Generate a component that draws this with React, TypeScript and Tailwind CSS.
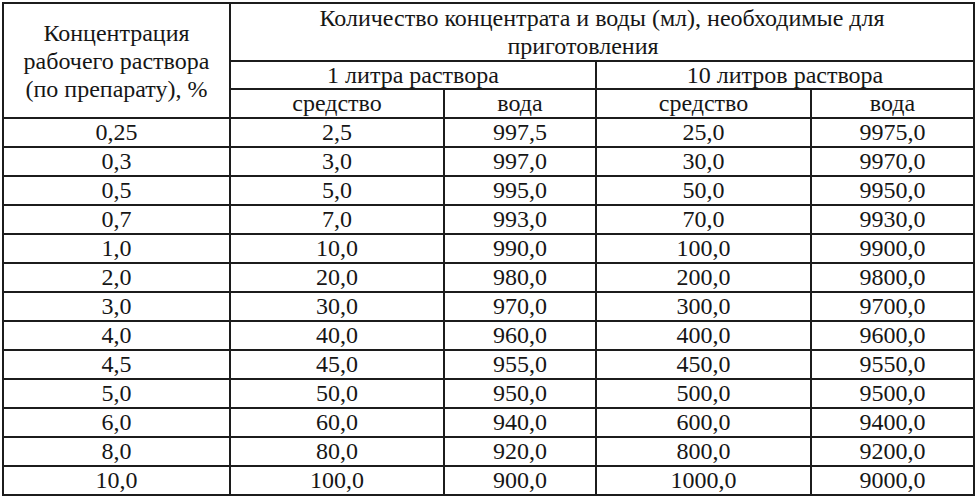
const rows: [string, string, string, string, string][] = [
  ['0,25', '2,5', '997,5', '25,0', '9975,0'],
  ['0,3', '3,0', '997,0', '30,0', '9970,0'],
  ['0,5', '5,0', '995,0', '50,0', '9950,0'],
  ['0,7', '7,0', '993,0', '70,0', '9930,0'],
  ['1,0', '10,0', '990,0', '100,0', '9900,0'],
  ['2,0', '20,0', '980,0', '200,0', '9800,0'],
  ['3,0', '30,0', '970,0', '300,0', '9700,0'],
  ['4,0', '40,0', '960,0', '400,0', '9600,0'],
  ['4,5', '45,0', '955,0', '450,0', '9550,0'],
  ['5,0', '50,0', '950,0', '500,0', '9500,0'],
  ['6,0', '60,0', '940,0', '600,0', '9400,0'],
  ['8,0', '80,0', '920,0', '800,0', '9200,0'],
  ['10,0', '100,0', '900,0', '1000,0', '9000,0'],
]

const cell = 'border-2 border-[#1c1c1c] text-center align-middle p-0 leading-[25px]'

export default function App() {
  return (
    <div className="w-[975px] h-[498px] bg-white pl-[2px] pt-[2px] font-['Liberation_Serif',serif] text-[24px] text-[#161616]">
      <table className="border-collapse table-fixed w-[971px]">
        <colgroup>
          <col className="w-[227px]" />
          <col className="w-[214px]" />
          <col className="w-[152px]" />
          <col className="w-[215px]" />
          <col className="w-[163px]" />
        </colgroup>
        <thead>
          <tr className="h-[58px]">
            <td rowSpan={3} className={`${cell} leading-[28px]`}>
              Концентрация
              <br />
              рабочего раствора
              <br />
              (по препарату), %
            </td>
            <td colSpan={4} className={`${cell} leading-[28px]`}>
              Количество концентрата и воды (мл), необходимые для
              <br />
              <span className="inline-block pr-[38px]">приготовления</span>
            </td>
          </tr>
          <tr className="h-[28px]">
            <td colSpan={2} className={cell}>1 литра раствора</td>
            <td colSpan={2} className={cell}>10 литров раствора</td>
          </tr>
          <tr className="h-[29px]">
            <td className={cell}>средство</td>
            <td className={cell}>вода</td>
            <td className={cell}>средство</td>
            <td className={cell}>вода</td>
          </tr>
        </thead>
        <tbody>
          {rows.map((r) => (
            <tr key={r[0]} className="h-[29px]">
              {r.map((v, i) => (
                <td key={i} className={cell}>
                  {v}
                </td>
              ))}
            </tr>
          ))}
        </tbody>
      </table>
    </div>
  )
}
